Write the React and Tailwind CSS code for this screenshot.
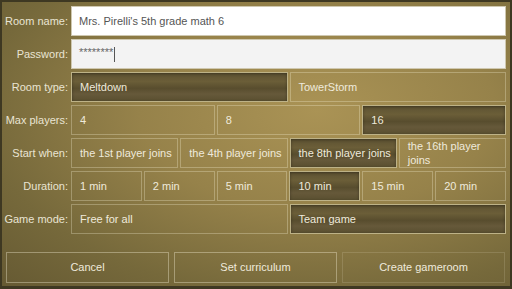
import React from 'react';

const font = { fontFamily: '"Liberation Sans", Arial, sans-serif' };

const rows = [
  { label: 'Room type:', options: ['Meltdown', 'TowerStorm'], selected: 0 },
  { label: 'Max players:', options: ['4', '8', '16'], selected: 2 },
  {
    label: 'Start when:',
    options: ['the 1st player joins', 'the 4th player joins', 'the 8th player joins', 'the 16th player joins'],
    selected: 2,
  },
  { label: 'Duration:', options: ['1 min', '2 min', '5 min', '10 min', '15 min', '20 min'], selected: 3 },
  { label: 'Game mode:', options: ['Free for all', 'Team game'], selected: 1 },
];

function Label({ children }) {
  return (
    <div className="w-[67px] shrink-0 text-right text-[11px] text-[#e9e4d3] pr-[1px] leading-none">
      {children}
    </div>
  );
}

function Option({ text, selected }) {
  return (
    <div
      className={
        'flex-1 min-w-0 flex items-center pl-2 pr-[2px] text-[11px] leading-[14px] text-[#efeadc] border ' +
        (selected
          ? 'border-[#bdb287] bg-[linear-gradient(180deg,#5d5232_0%,#6b5e38_30%,#584d2e_55%,#66593a_75%,#5a4f30_100%)] shadow-[inset_0_1px_3px_rgba(0,0,0,0.35)]'
          : 'border-[rgba(255,250,225,0.28)]')
      }
    >
      {text}
    </div>
  );
}

export default function App() {
  return (
    <div
      style={font}
      className="w-[512px] h-[289px] overflow-hidden border-2 border-b-[3px] border-[#3e3822] bg-[radial-gradient(ellipse_at_62%_38%,#aa9355_0%,#96824a_40%,#76693b_75%,#665a33_100%)] flex flex-col"
    >
      <div className="flex flex-col gap-[3px] pt-[4px] pr-[4px]">
        <div className="flex items-center h-[30px]">
          <Label>Room name:</Label>
          <div className="ml-[2px] flex-1 h-full bg-white border border-[#cfc8b0] flex items-center pl-[7px] text-[11px] text-[#555]">
            Mrs. Pirelli's 5th grade math 6
          </div>
        </div>
        <div className="flex items-center h-[30px]">
          <Label>Password:</Label>
          <div className="ml-[2px] flex-1 h-full bg-[#f3f3f3] border border-[#cfc8b0] flex items-center pl-[7px] text-[11px] text-[#666]">
            <span className="leading-none -mt-[3px]">********</span>
            <span className="ml-[1px] w-px h-[15px] bg-[#555]" />
          </div>
        </div>
        {rows.map((row) => (
          <div key={row.label} className="flex items-center h-[30px]">
            <Label>{row.label}</Label>
            <div className="ml-[2px] flex-1 h-full flex gap-[2px]">
              {row.options.map((o, i) => (
                <Option key={o} text={o} selected={i === row.selected} />
              ))}
            </div>
          </div>
        ))}
      </div>
      <div className="mt-auto mb-[3px] flex gap-[5px] pl-[4px] pr-[5px]">
        <button className="flex-1 h-[31px] border border-[rgba(255,250,225,0.35)] text-[11px] text-[#efeadc]">
          Cancel
        </button>
        <button className="flex-1 h-[31px] border border-[rgba(255,250,225,0.35)] text-[11px] text-[#efeadc]">
          Set curriculum
        </button>
        <button className="flex-1 h-[31px] border border-[rgba(255,250,225,0.14)] text-[11px] text-[#efeadc]">
          Create gameroom
        </button>
      </div>
    </div>
  );
}
